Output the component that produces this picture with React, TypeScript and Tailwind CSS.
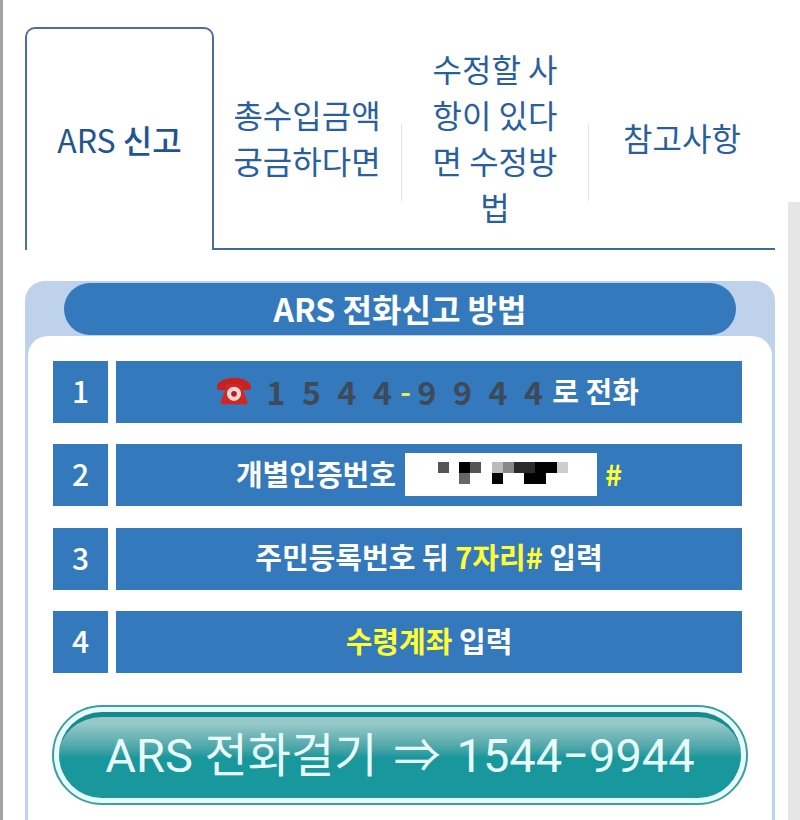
import React from 'react';

const font = "font-['Noto_Sans_CJK_KR','Noto_Sans',sans-serif]";

const PhoneIcon = () => (
  <svg width="36" height="30" viewBox="0 0 38 30" className="shrink-0">
    <path d="M1 11C1 5 10 1 19 1s18 4 18 10c0 2-1 3-3 3h-5c-2 0-2-1-2-3V9c-5-1-11-1-16 0v2c0 2 0 3-2 3H4c-2 0-3-1-3-3z" fill="#c9211e" />
    <path d="M12 8h14l7 18c.5 2 0 3-2 3H7c-2 0-2.500-1-2-3z" fill="#d32622" />
    <circle cx="19" cy="18" r="7.500" fill="#f3d6d6" />
    <circle cx="19" cy="18" r="3" fill="#b81c1c" />
  </svg>
);

const CensorBlocks = () => (
  <svg width="192" height="43" viewBox="0 0 192 43" className="block">
    <rect x="33" y="9" width="11" height="11" fill="#555" />
    <rect x="54" y="9" width="11" height="11" fill="#000" />
    <rect x="65" y="9" width="11" height="11" fill="#555" />
    <rect x="54" y="20" width="11" height="11" fill="#666" />
    <rect x="87" y="9" width="11" height="11" fill="#bbb" />
    <rect x="98" y="9" width="11" height="11" fill="#888" />
    <rect x="109" y="9" width="21" height="11" fill="#2a2a2a" />
    <rect x="130" y="9" width="22" height="11" fill="#000" />
    <rect x="152" y="9" width="11" height="11" fill="#ccc" />
    <rect x="87" y="20" width="11" height="11" fill="#000" />
    <rect x="119" y="20" width="22" height="11" fill="#000" />
  </svg>
);

const Digits = ({ value }: { value: string }) => (
  <>
    {value.split('').map((d, i) => (
      <span key={i} className="w-[35.5px] text-center text-[#3c4a5a] text-[32px]">{d}</span>
    ))}
  </>
);

const Row = ({ num, children }: { num: string; children: React.ReactNode }) => (
  <div className="flex gap-[8px] h-[62px]">
    <div className="w-[55px] shrink-0 bg-[#3579bd] flex items-center justify-center text-white text-[30px] font-medium pb-[3px]">{num}</div>
    <div className="flex-1 bg-[#3579bd] flex items-center justify-center text-white text-[29px] font-bold pb-[3px]">{children}</div>
  </div>
);

export default function App() {
  return (
    <div className={`flex w-[800px] h-[820px] overflow-hidden bg-white ${font}`}>
      <div className="w-[3px] shrink-0 bg-[#a3a3a3]" />

      <div className="flex-1 pl-[22px] pr-[13px] pt-[27px]">
        {/* tabs */}
        <div className="flex h-[223px] text-[32px] leading-[46px] text-[#2a5f9e] text-center">
          <div className="w-[189px] shrink-0 flex items-center justify-center border-2 border-b-0 border-[#4a7099] rounded-t-[10px] pb-[2px]">
            <span className="text-[#24548f]">ARS <span className="font-medium">신고</span></span>
          </div>
          <div className="flex-1 flex border-b-2 border-[#3d6c9c] -ml-[1px]">
            <div className="w-[188px] flex items-center justify-center pb-[2px]">총수입금액<br />궁금하다면</div>
            <div className="w-[1px] h-[77px] mt-[97px] bg-[#e3e3e3]" />
            <div className="w-[186px] flex items-center justify-center px-[26px] pb-[2px]">수정할 사항이 있다면 수정방법</div>
            <div className="w-[1px] h-[77px] mt-[97px] bg-[#e3e3e3]" />
            <div className="flex-1 flex items-center justify-center pb-[2px]">참고사항</div>
          </div>
        </div>

        {/* ARS panel */}
        <div className="mt-[31px] h-[700px] rounded-t-[20px] bg-[#bfd2ec] px-[3px] pt-[2px]">
          <div className="mx-[36px] h-[52px] rounded-full bg-[#3579bd] flex items-center justify-center text-white text-[32px] font-bold pb-[3px]">ARS 전화신고 방법</div>
          <div className="mt-[1px] h-full rounded-t-[20px] bg-white px-[24px] pt-[25px]">
            <div className="ml-[1px] mr-[6px] flex flex-col gap-[21.33px]">
              <Row num="1">
                <span className="mr-[6px]"><PhoneIcon /></span>
                <Digits value="1544" />
                <span className="w-[9px] text-center text-[#e8ee5a]">-</span>
                <Digits value="9944" />
                <span className="ml-[1px] mr-[3px]">로 전화</span>
              </Row>
              <Row num="2">
                <span className="mr-[9px]">개별인증번호</span>
                <div className="w-[192px] h-[43px] bg-white mt-[2px]"><CensorBlocks /></div>
                <span className="ml-[8px] text-[#ffff33]">#</span>
              </Row>
              <Row num="3">
                <span>주민등록번호 뒤&nbsp;<span className="text-[#ffff33]">7자리#</span> 입력</span>
              </Row>
              <Row num="4">
                <span><span className="text-[#ffff33]">수령계좌</span> 입력</span>
              </Row>
            </div>

            {/* call button */}
            <div className="mt-[32px] h-[100px] rounded-full border-2 border-[#3f9ea0] bg-[#e6fbfb] p-[5px]">
              <div className="h-full rounded-full border-t-[5px] border-[#18898d] bg-gradient-to-b from-[#96c9c8] from-8% to-[#18979c] to-50% flex items-center justify-center text-[47px] text-[#e8fbfb] gap-[16px] pb-[3px] font-['Roboto','Noto_Sans_CJK_KR',sans-serif]">
                <span>ARS 전화걸기</span>
                <span>⇒</span>
                <span>1544−9944</span>
              </div>
            </div>
          </div>
        </div>
      </div>

      <div className="w-[12px] shrink-0 pt-[202px]">
        <div className="h-full bg-[#e6e6e6]" />
      </div>
    </div>
  );
}
